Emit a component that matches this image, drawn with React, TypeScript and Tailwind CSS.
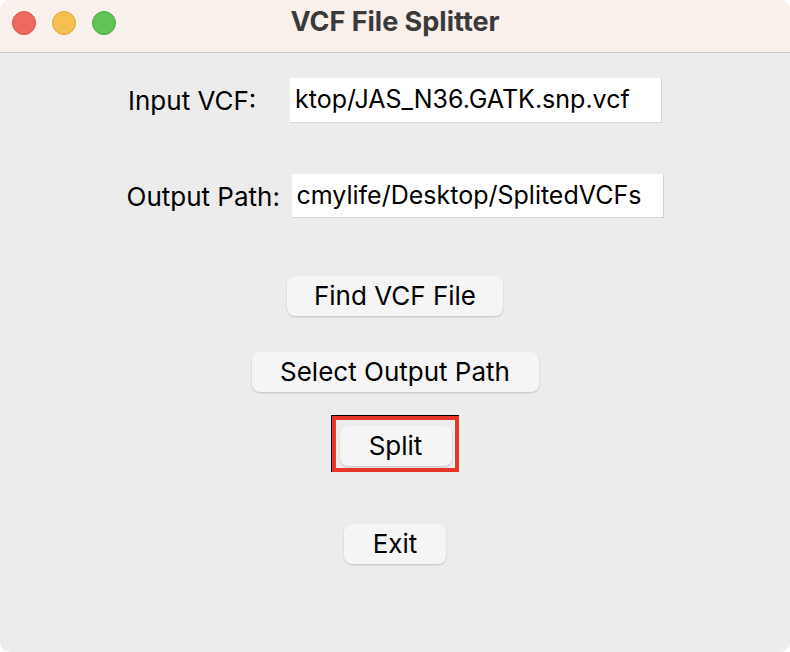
export default function App() {
  return (
    <div className="w-[790px] h-[652px] bg-white" style={{ fontFamily: "Inter, 'Liberation Sans', sans-serif" }}>
      <div className="w-full h-full rounded-[10px] overflow-hidden bg-[#ececec] flex flex-col">
        {/* title bar */}
        <div className="h-[53px] shrink-0 bg-[#f9efeb] border-b border-[#c9c7c6] relative flex items-center justify-center">
          <div className="absolute left-[12px] top-[11px] flex gap-[16px]">
            <span className="w-[24px] h-[24px] rounded-full bg-[#ee6a5e] border border-[#d5544a]" />
            <span className="w-[24px] h-[24px] rounded-full bg-[#f6c050] border border-[#dba53c]" />
            <span className="w-[24px] h-[24px] rounded-full bg-[#5fc454] border border-[#4aa93e]" />
          </div>
          <span className="text-[27px] font-bold text-[#3a3a3a] -mt-[7px]">VCF File Splitter</span>
        </div>

        {/* form */}
        <div className="flex flex-col items-center pt-[25px] text-[26px] text-black">
          <div className="flex items-center w-[534px]">
            <span className="w-[162px]">Input VCF:</span>
            <div className="w-[372px] h-[45px] bg-white border-b border-r border-[#d6d6d6] flex items-center pl-[5px] whitespace-nowrap overflow-hidden text-[25px]">
              ktop/JAS_N36.GATK.snp.vcf
            </div>
          </div>

          <div className="flex items-center mt-[51px] w-[537px]">
            <span className="w-[165px]">Output Path:</span>
            <div className="w-[372px] h-[44px] bg-white border-b border-r border-[#d6d6d6] flex items-center pl-[5px] whitespace-nowrap overflow-hidden text-[25px]">
              cmylife/Desktop/SplitedVCFs
            </div>
          </div>

          <button className="mt-[58px] w-[216px] h-[40px] pb-[3px] rounded-[8px] bg-[#f5f5f5] shadow-[0_1px_2px_rgba(0,0,0,0.18)]">
            Find VCF File
          </button>

          <button className="mt-[36px] w-[287px] h-[40px] pb-[3px] rounded-[8px] bg-[#f5f5f5] shadow-[0_1px_2px_rgba(0,0,0,0.18)]">
            Select Output Path
          </button>

          <div className="mt-[23px] w-[128px] h-[57px] border-l border-t border-black">
            <div className="w-full h-full border-[4px] border-[#e8352a] flex items-center justify-center">
              <button className="w-[112px] h-[40px] mt-[3px] rounded-[8px] bg-[#f5f5f5] shadow-[0_1px_2px_rgba(0,0,0,0.18)]">
                Split
              </button>
            </div>
          </div>

          <button className="mt-[52px] w-[102px] h-[40px] pb-[2px] rounded-[8px] bg-[#f5f5f5] shadow-[0_1px_2px_rgba(0,0,0,0.18)]">
            Exit
          </button>
        </div>
      </div>
    </div>
  );
}
